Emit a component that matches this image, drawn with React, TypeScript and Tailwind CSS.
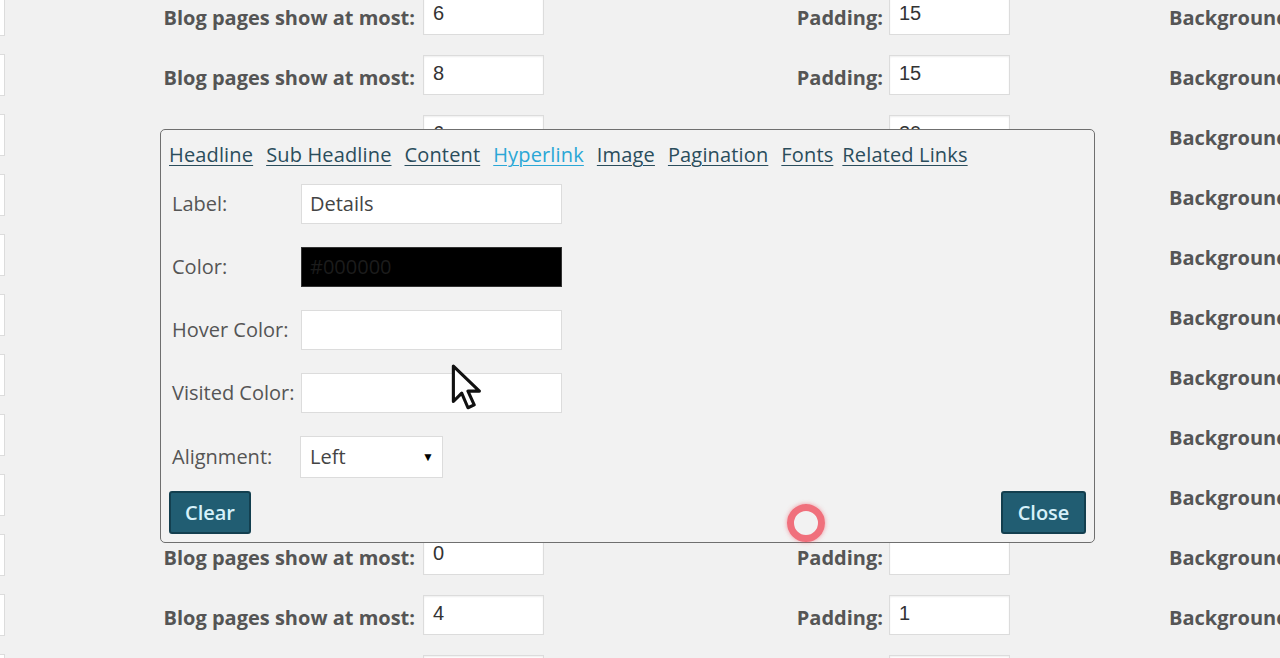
import React from "react";

const rows: { blog: string; pad: string }[] = [
  { blog: "6", pad: "15" },
  { blog: "8", pad: "15" },
  { blog: "6", pad: "20" },
  { blog: "5", pad: "15" },
  { blog: "5", pad: "15" },
  { blog: "5", pad: "15" },
  { blog: "5", pad: "15" },
  { blog: "5", pad: "15" },
  { blog: "5", pad: "15" },
  { blog: "0", pad: "" },
  { blog: "4", pad: "1" },
  { blog: "", pad: "" },
];

const sans = "font-['Open_Sans','Noto_Sans',sans-serif]";

function BgInput({ value, className }: { value: string; className?: string }) {
  return (
    <div
      className={
        "w-[121px] h-[40px] shrink-0 bg-white border border-[#dcdcdc] shadow-[inset_0_1px_2px_rgba(0,0,0,0.07)] flex items-center pl-[9px] pb-[4px] text-[20px] text-[#333] font-['Liberation_Sans',Arial,sans-serif] " +
        (className ?? "")
      }
    >
      {value}
    </div>
  );
}

const tabs = [
  "Headline",
  "Sub Headline",
  "Content",
  "Hyperlink",
  "Image",
  "Pagination",
  "Fonts",
  "Related Links",
];

function FormRow({ label, children, className }: { label: string; children: React.ReactNode; className?: string }) {
  return (
    <div className={"flex items-center " + (className ?? "")}>
      <div className="w-[129px] shrink-0 text-[20px] text-[#555] whitespace-nowrap">{label}</div>
      {children}
    </div>
  );
}

export default function App() {
  return (
    <div className={"relative w-[1280px] h-[658px] overflow-hidden bg-[#f1f1f1] " + sans}>
      <div className="flex flex-col mt-[-15px]">
        {rows.map((r, i) => (
          <div key={i} className="flex items-center h-[60px] whitespace-nowrap">
            <div className="w-[121px] h-[42px] ml-[-116px] shrink-0 bg-white border border-[#dcdcdc]" />
            <div className="w-[410px] shrink-0 text-right font-bold text-[20px] text-[#555] pt-[5px]">
              Blog pages show at most:
            </div>
            <BgInput value={r.blog} className="ml-[8px]" />
            <div className="w-[339px] shrink-0 text-right font-bold text-[20px] text-[#555] pt-[5px]">
              Padding:
            </div>
            <BgInput value={r.pad} className="ml-[6px]" />
            <div className="ml-[159px] shrink-0 font-bold text-[20px] text-[#555] pt-[5px]">
              Background Color:
            </div>
          </div>
        ))}
      </div>

      {/* Modal */}
      <div className="absolute left-[160px] top-[129px] w-[935px] h-[414px] bg-[#f2f2f2] border border-[#6f6f6f] rounded-[5px] flex flex-col">
        <div className="flex items-center h-[26px] mt-[12px] pl-[8px] text-[20px] tracking-[0.15px] whitespace-nowrap">
          {tabs.map((t, i) => (
            <span
              key={t}
              className={
                "underline underline-offset-[3px] decoration-[1px] " +
                (t === "Hyperlink" ? "text-[#2aa7d6] " : "text-[#2a4d5c] ") +
                (i === 0 ? "" : t === "Related Links" ? "ml-[9px]" : "ml-[13px]")
              }
            >
              {t}
            </span>
          ))}
        </div>

        <div className="flex flex-col pl-[11px] mt-[16px]">
          <FormRow label="Label:">
            <div className="w-[261px] h-[40px] bg-white border border-[#dcdcdc] flex items-center pl-[8px] text-[20px] text-[#444]">
              Details
            </div>
          </FormRow>
          <FormRow label="Color:" className="mt-[23px]">
            <div className="w-[261px] h-[40px] bg-black border border-[#333] flex items-center pl-[8px] text-[20px] text-[#1c1c1c]">
              #000000
            </div>
          </FormRow>
          <FormRow label="Hover Color:" className="mt-[23px]">
            <div className="w-[261px] h-[40px] bg-white border border-[#dcdcdc]" />
          </FormRow>
          <FormRow label="Visited Color:" className="mt-[23px]">
            <div className="w-[261px] h-[40px] bg-white border border-[#dcdcdc]" />
          </FormRow>
          <FormRow label="Alignment:" className="mt-[23px]">
            <div className="w-[143px] h-[42px] ml-[-1px] bg-white border border-[#dcdcdc] flex items-center pl-[9px] pr-[8px] text-[20px] text-[#444]">
              <span className="flex-1">Left</span>
              <span className="text-[12px] text-black">▼</span>
            </div>
          </FormRow>
        </div>

        <div className="flex items-center justify-between px-[8px] mt-[13px]">
          <button className="w-[82px] h-[43px] rounded-[3px] bg-[#215d72] border-2 border-[#133f4f] text-[#d6f1fa] text-[20px] font-semibold flex items-center justify-center">
            Clear
          </button>
          <button className="w-[85px] h-[43px] rounded-[3px] bg-[#215d72] border-2 border-[#133f4f] text-[#d6f1fa] text-[20px] font-semibold flex items-center justify-center">
            Close
          </button>
        </div>
      </div>

      {/* click indicator */}
      <div className="absolute left-[787px] top-[504px] w-[38px] h-[38px] rounded-full border-[7px] border-[#f06270] opacity-90 shadow-[0_0_4px_rgba(240,98,112,0.7)]" />

      {/* mouse cursor */}
      <svg className="absolute left-[451px] top-[364px]" width="36" height="50" viewBox="0 0 17 24">
        <path
          d="M1 1 L1 18 L5 14 L8 21 L11 19.6 L8 13 L13.5 13 Z"
          fill="#fff"
          stroke="#111"
          strokeWidth="1.5"
          strokeLinejoin="round"
        />
      </svg>
    </div>
  );
}
